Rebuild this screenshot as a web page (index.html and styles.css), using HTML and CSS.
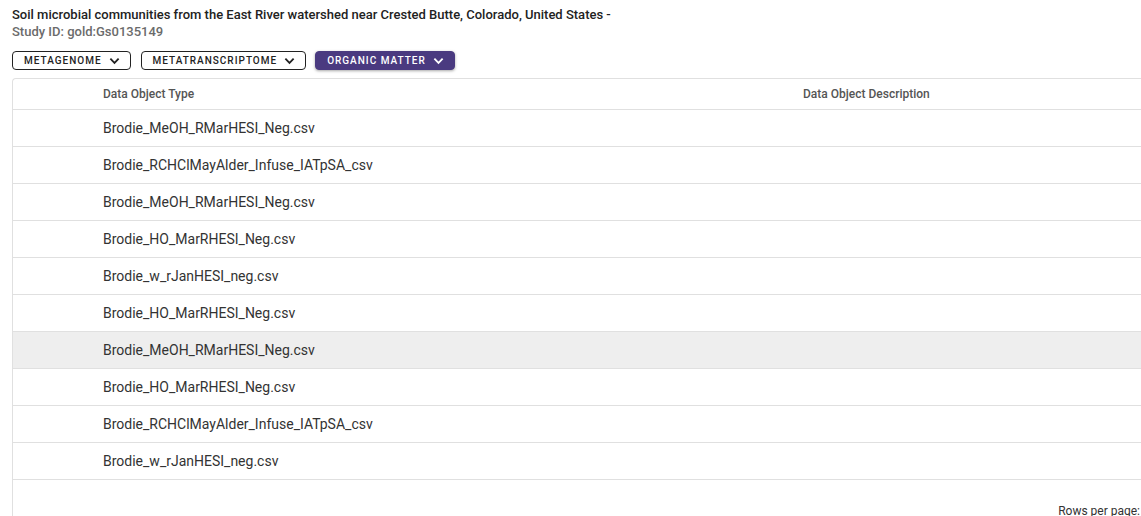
FILE: index.html
```html
<!DOCTYPE html>
<html>
<head>
<meta charset="utf-8">
<link rel="stylesheet" href="styles.css">
</head>
<body>
<div class="page">
  <div class="title">Soil microbial communities from the East River watershed near Crested Butte, Colorado, United States -</div>
  <div class="study-id">Study ID: gold:Gs0135149</div>
  <div class="buttons">
    <button class="btn outline">METAGENOME <svg class="chev" viewBox="0 0 12 8"><path d="M1.5 1.5 L6 6 L10.5 1.5" /></svg></button>
    <button class="btn outline">METATRANSCRIPTOME <svg class="chev" viewBox="0 0 12 8"><path d="M1.5 1.5 L6 6 L10.5 1.5" /></svg></button>
    <button class="btn filled">ORGANIC MATTER <svg class="chev" viewBox="0 0 12 8"><path d="M1.5 1.5 L6 6 L10.5 1.5" /></svg></button>
  </div>
  <div class="table">
    <div class="row head">
      <div class="c0"></div>
      <div class="c1">Data Object Type</div>
      <div class="c2">Data Object Description</div>
    </div>
    <div class="row"><div class="c0"></div><div class="c1">Brodie_MeOH_RMarHESI_Neg.csv</div><div class="c2"></div></div>
    <div class="row"><div class="c0"></div><div class="c1">Brodie_RCHClMayAlder_Infuse_IATpSA_csv</div><div class="c2"></div></div>
    <div class="row"><div class="c0"></div><div class="c1">Brodie_MeOH_RMarHESI_Neg.csv</div><div class="c2"></div></div>
    <div class="row"><div class="c0"></div><div class="c1">Brodie_HO_MarRHESI_Neg.csv</div><div class="c2"></div></div>
    <div class="row"><div class="c0"></div><div class="c1">Brodie_w_rJanHESI_neg.csv</div><div class="c2"></div></div>
    <div class="row"><div class="c0"></div><div class="c1">Brodie_HO_MarRHESI_Neg.csv</div><div class="c2"></div></div>
    <div class="row hover"><div class="c0"></div><div class="c1">Brodie_MeOH_RMarHESI_Neg.csv</div><div class="c2"></div></div>
    <div class="row"><div class="c0"></div><div class="c1">Brodie_HO_MarRHESI_Neg.csv</div><div class="c2"></div></div>
    <div class="row"><div class="c0"></div><div class="c1">Brodie_RCHClMayAlder_Infuse_IATpSA_csv</div><div class="c2"></div></div>
    <div class="row"><div class="c0"></div><div class="c1">Brodie_w_rJanHESI_neg.csv</div><div class="c2"></div></div>
    <div class="footer">
      <span class="rpp">Rows per page:</span>
    </div>
  </div>
</div>
</body>
</html>
```
FILE: styles.css
```css
html, body {
  margin: 0;
  padding: 0;
  background: #fff;
  overflow: hidden;
}
body {
  font-family: Roboto, "Liberation Sans", sans-serif;
  color: #222;
}
.page {
  padding: 6px 0 0 12px;
  width: 1129px;
}
.title {
  font-size: 13px;
  font-weight: 500;
  line-height: 17px;
  color: #222;
}
.study-id {
  font-size: 13px;
  line-height: 17px;
  color: #6b6b6b;
  font-weight: 500;
}
.buttons {
  display: flex;
  gap: 10px;
  margin-top: 11px;
  height: 19px;
}
.btn {
  display: flex;
  align-items: center;
  gap: 7px;
  height: 19px;
  padding: 0 10px 0 11px;
  font-family: Roboto, "Liberation Sans", sans-serif;
  font-size: 10px;
  font-weight: 500;
  letter-spacing: 1px;
  border-radius: 4px;
  box-sizing: border-box;
  cursor: pointer;
}
.btn.outline {
  background: #fff;
  color: #222;
  border: 1px solid #222;
}
.btn.filled {
  background: #4a3a80;
  color: #fff;
  border: 1px solid #4a3a80;
  box-shadow: 0 1px 3px rgba(0,0,0,0.35);
  margin-left: -1px;
}
.chev {
  width: 11px;
  height: 8px;
  fill: none;
  stroke: currentColor;
  stroke-width: 2;
}
.table {
  margin-top: 8px;
  border-left: 1px solid #e0e0e0;
  border-top: 1px solid #e0e0e0;
  border-top-left-radius: 4px;
  width: 1160px;
}
.row {
  display: flex;
  align-items: center;
  height: 36px;
  border-bottom: 1px solid #e0e0e0;
  font-size: 14px;
  color: #333;
}
.row.head {
  height: 30px;
  font-size: 12px;
  font-weight: 500;
  color: #555;
}
.row.hover {
  background: #eeeeee;
}
.c0 {
  width: 90px;
  flex: none;
}
.c1 {
  width: 700px;
  flex: none;
}
.c2 {
  flex: 1;
}
.footer {
  height: 36px;
  display: flex;
  align-items: flex-end;
  justify-content: flex-end;
  padding-right: 33px;
}
.rpp {
  font-size: 12px;
  color: #333;
  line-height: 14px;
  margin-bottom: -2px;
  white-space: nowrap;
}
```
